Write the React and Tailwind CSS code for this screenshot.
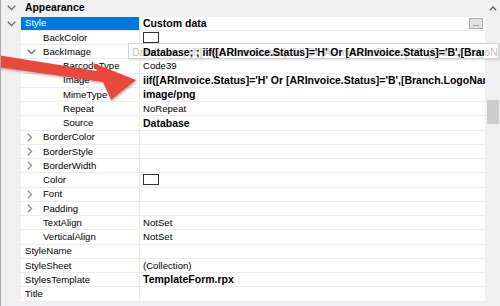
import React from 'react';

const LONG_IIF = "iif([ARInvoice.Status]='H' Or [ARInvoice.Status]='B',[Branch.LogoName],[Branch.LogoAlt])";

const rows = [
  { label: 'Style', level: 1, open: true, selected: true, value: 'Custom data', bold: true, button: true },
  { label: 'BackColor', level: 2, swatch: true },
  { label: 'BackImage', level: 2, open: true, value: 'Database; ; ' + LONG_IIF, bold: true },
  { label: 'BarcodeType', level: 3, value: 'Code39' },
  { label: 'Image', level: 3, value: LONG_IIF, bold: true },
  { label: 'MimeType', level: 3, value: 'image/png', bold: true },
  { label: 'Repeat', level: 3, value: 'NoRepeat' },
  { label: 'Source', level: 3, value: 'Database', bold: true },
  { label: 'BorderColor', level: 2, closed: true },
  { label: 'BorderStyle', level: 2, closed: true },
  { label: 'BorderWidth', level: 2, closed: true },
  { label: 'Color', level: 2, swatch: true },
  { label: 'Font', level: 2, closed: true },
  { label: 'Padding', level: 2, closed: true },
  { label: 'TextAlign', level: 2, value: 'NotSet' },
  { label: 'VerticalAlign', level: 2, value: 'NotSet' },
  { label: 'StyleName', level: 1 },
  { label: 'StyleSheet', level: 1, value: '(Collection)' },
  { label: 'StylesTemplate', level: 1, value: 'TemplateForm.rpx', bold: true },
  { label: 'Title', level: 1 },
];

function ChevronDown() {
  return (
    <svg width="9" height="6" viewBox="0 0 9 6" className="block">
      <path d="M0.8 0.8 L4.5 4.6 L8.2 0.8" fill="none" stroke="#666" strokeWidth="1.3" />
    </svg>
  );
}

function ChevronRight() {
  return (
    <svg width="6" height="9" viewBox="0 0 6 9" className="block">
      <path d="M0.8 0.8 L4.6 4.5 L0.8 8.2" fill="none" stroke="#8a8a8a" strokeWidth="1.2" />
    </svg>
  );
}

function Row({ row }) {
  const indent = { 1: 'pl-[4px]', 2: 'pl-[22px]', 3: 'pl-[42px]' }[row.level];
  return (
    <div className="flex h-[14.25px]">
      <div className="w-[20px] shrink-0 bg-[#f0f0f0] flex items-center justify-center">
        {row.level === 1 && row.open && <ChevronDown />}
      </div>
      <div
        className={`relative w-[119px] shrink-0 flex items-center border-b border-r border-[#ebebf0] ${indent} ${
          row.selected ? 'bg-[#0078d7] text-white' : 'text-black'
        }`}
      >
        {row.level === 2 && (row.open || row.closed) && (
          <span className="absolute left-[6px] top-0 bottom-0 flex items-center">
            {row.open ? <ChevronDown /> : <ChevronRight />}
          </span>
        )}
        <span className="text-[9.6px] leading-none whitespace-nowrap">{row.label}</span>
      </div>
      <div className="relative flex-1 min-w-0 flex items-center pl-[3px] border-b border-[#ebebf0] overflow-hidden">
        {row.swatch && <span className="block w-[16px] h-[11px] border border-[#333] bg-white" />}
        {row.value && (
          <span
            className={`whitespace-nowrap leading-none text-black ${
              row.bold ? 'font-bold text-[10.5px]' : 'text-[9.6px]'
            }`}
          >
            {row.value}
          </span>
        )}
        {row.button && (
          <span className="absolute right-[2px] top-[1px] w-[14px] h-[11px] bg-[#e1e1e1] border border-[#adadad] flex items-end justify-center text-[8px] leading-[8px] text-black">
            ...
          </span>
        )}
      </div>
    </div>
  );
}

export default function App() {
  return (
    <div className="relative w-[500px] h-[306px] overflow-hidden bg-white font-['Liberation_Sans',Arial,sans-serif] border-l border-[#a8a8a8]">
      <div className="flex h-full">
        <div className="flex-1 min-w-0 flex flex-col">
          <div className="flex h-[16.5px] bg-[#f0f0f0] shrink-0">
            <div className="w-[20px] shrink-0 flex items-center justify-center">
              <ChevronDown />
            </div>
            <div className="flex items-center pl-[4px] text-[10.4px] font-bold text-black leading-none">Appearance</div>
          </div>
          {rows.map((row) => (
            <Row key={row.label} row={row} />
          ))}
          <div className="flex-1 bg-[#f0f0f4]" />
        </div>
        <div className="w-[15px] shrink-0 bg-[#f0f0f0] flex flex-col items-center">
          <div className="h-[16px] flex items-center">
            <svg width="8" height="5" viewBox="0 0 8 5">
              <path d="M0.8 4.2 L4 1 L7.2 4.2" fill="none" stroke="#606060" strokeWidth="1.3" />
            </svg>
          </div>
          <div className="h-[84px]" />
          <div className="w-[12px] h-[24px] bg-[#cdcdcd]" />
        </div>
      </div>

      {/* tooltip over the BackImage row */}
      <div className="absolute left-[127px] top-[43px] w-[371px] h-[16px] bg-white border border-[#d4d4d4] shadow-[1px_1px_2px_rgba(0,0,0,0.15)] overflow-hidden">
        <span className="absolute left-[3px] top-[3px] whitespace-nowrap text-[10.5px] leading-none text-[#c4c4c4]">
          {'Database; ; ' + LONG_IIF}
        </span>
        <span className="absolute left-[14px] top-[3px] right-[14px] overflow-hidden whitespace-nowrap text-[10.5px] font-bold leading-none text-black">
          {'Database; ; ' + LONG_IIF}
        </span>
      </div>

      {/* red annotation arrow */}
      <svg className="absolute left-0 top-0 pointer-events-none" width="500" height="306" viewBox="0 0 500 306">
        <defs>
          <filter id="sh" x="-10%" y="-20%" width="130%" height="160%">
            <feDropShadow dx="1" dy="1.5" stdDeviation="1" floodColor="#000" floodOpacity="0.3" />
          </filter>
        </defs>
        <polygon
          points="-4,55 96,71 92,63 135,80 110,100 102,82 -4,67"
          fill="#e8493e"
          filter="url(#sh)"
        />
      </svg>
    </div>
  );
}
